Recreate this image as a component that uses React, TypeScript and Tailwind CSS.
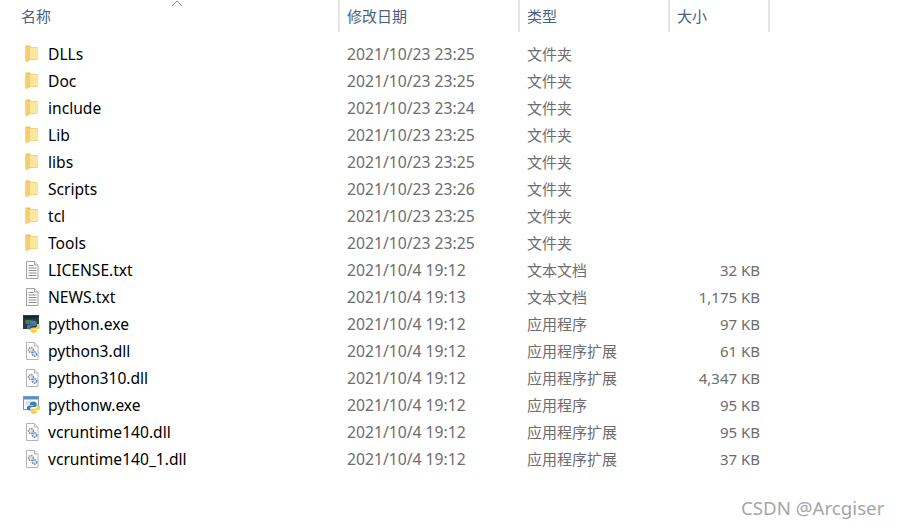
const folderType = "文件夹";

type Kind = "folder" | "txt" | "exe" | "exew" | "dll";

const files: { name: string; date: string; type: string; size: string; kind: Kind }[] = [
  { name: "DLLs", date: "2021/10/23 23:25", type: folderType, size: "", kind: "folder" },
  { name: "Doc", date: "2021/10/23 23:25", type: folderType, size: "", kind: "folder" },
  { name: "include", date: "2021/10/23 23:24", type: folderType, size: "", kind: "folder" },
  { name: "Lib", date: "2021/10/23 23:25", type: folderType, size: "", kind: "folder" },
  { name: "libs", date: "2021/10/23 23:25", type: folderType, size: "", kind: "folder" },
  { name: "Scripts", date: "2021/10/23 23:26", type: folderType, size: "", kind: "folder" },
  { name: "tcl", date: "2021/10/23 23:25", type: folderType, size: "", kind: "folder" },
  { name: "Tools", date: "2021/10/23 23:25", type: folderType, size: "", kind: "folder" },
  { name: "LICENSE.txt", date: "2021/10/4 19:12", type: "文本文档", size: "32 KB", kind: "txt" },
  { name: "NEWS.txt", date: "2021/10/4 19:13", type: "文本文档", size: "1,175 KB", kind: "txt" },
  { name: "python.exe", date: "2021/10/4 19:12", type: "应用程序", size: "97 KB", kind: "exe" },
  { name: "python3.dll", date: "2021/10/4 19:12", type: "应用程序扩展", size: "61 KB", kind: "dll" },
  { name: "python310.dll", date: "2021/10/4 19:12", type: "应用程序扩展", size: "4,347 KB", kind: "dll" },
  { name: "pythonw.exe", date: "2021/10/4 19:12", type: "应用程序", size: "95 KB", kind: "exew" },
  { name: "vcruntime140.dll", date: "2021/10/4 19:12", type: "应用程序扩展", size: "95 KB", kind: "dll" },
  { name: "vcruntime140_1.dll", date: "2021/10/4 19:12", type: "应用程序扩展", size: "37 KB", kind: "dll" },
];

function FolderIcon() {
  return (
    <svg width="16" height="18" viewBox="0 0 16 18">
      <path d="M1.500 0.500h4.500l1 1.500h6.500v13h-12z" fill="#e8c064" />
      <path d="M5 2.500h8v12H5z" fill="#fde79c" />
      <path d="M1.500 1L6 3v12.500L1.500 17.500z" fill="#f5cf6e" />
    </svg>
  );
}

function TxtIcon() {
  return (
    <svg width="16" height="18" viewBox="0 0 16 18">
      <path d="M2.500.5h8l3.500 3.500v13.500H2.500z" fill="#fff" stroke="#a0a0a0" />
      <path d="M10.500.5V4H14" fill="#f0f0f0" stroke="#a0a0a0" />
      <path d="M4.500 4.500h5M4.500 7h8M4.500 9.500h8M4.500 12h8M4.500 14.500h8" stroke="#8c8c8c" strokeWidth="1" />
    </svg>
  );
}

function DllIcon() {
  return (
    <svg width="16" height="18" viewBox="0 0 16 18">
      <path d="M2.500.5h8l3.500 3.500v13.500H2.500z" fill="#fff" stroke="#b4b4b4" />
      <path d="M10.500.5V4H14" fill="#f0f0f0" stroke="#b4b4b4" />
      <circle cx="7" cy="8" r="2.500" fill="#e2e2e2" stroke="#8f8f8f" strokeWidth="1.500" strokeDasharray="1.500 0.800" />
      <circle cx="10.500" cy="12" r="2.200" fill="#d5e6f5" stroke="#5d8fc0" strokeWidth="1.500" strokeDasharray="1.500 0.800" />
    </svg>
  );
}

function PythonLogo() {
  return (
    <g>
      <path d="M10.500 5.500c-2.500 0-3.500 1-3.500 2.200v1.300h3.500v.6H6c-1.300 0-2 1-2 2.400s.7 2.500 2 2.500h1.200v-1.700c0-1 .9-1.800 2-1.800h2.800c1 0 1.700-.8 1.700-1.700V7.700c0-1.200-1.500-2.200-3.200-2.200z" fill="#3f7fb5" />
      <path d="M10.500 18c2.500 0 3.500-1 3.500-2.200v-1.300h-3.500v-.6H15c1.300 0 2-1 2-2.400s-.7-2.500-2-2.500h-1v1.700c0 1-.9 1.800-2 1.800H9.200c-1 0-1.700.8-1.700 1.700v1.600C7.500 17 9 18 10.500 18z" fill="#f7cf4b" />
    </g>
  );
}

function ExeIcon({ light }: { light?: boolean }) {
  return (
    <svg width="18" height="18" viewBox="0 0 18 18" className="-ml-px">
      <rect x="0.500" y="0.500" width="15" height="13" fill={light ? "#fff" : "#2c3a45"} stroke={light ? "#7d97b0" : "#2c3a45"} />
      <rect x="1" y="1" width="14" height="2.500" fill={light ? "#4f93d2" : "#1c2730"} />
      {light ? (
        <path d="M2.500 6h6M2.500 8h4" stroke="#b5c4d3" />
      ) : (
        <path d="M2.500 6h6M2.500 8h4" stroke="#6fbf73" />
      )}
      <PythonLogo />
    </svg>
  );
}

function FileIcon({ kind }: { kind: Kind }) {
  if (kind === "folder") return <FolderIcon />;
  if (kind === "txt") return <TxtIcon />;
  if (kind === "dll") return <DllIcon />;
  return <ExeIcon light={kind === "exew"} />;
}

export default function App() {
  return (
    <div className="relative h-[528px] w-[900px] overflow-hidden bg-white font-['Noto_Sans','Noto_Sans_CJK_SC',sans-serif] text-[15px]">
      {/* sort arrow */}
      <svg className="absolute left-[171px] top-0" width="12" height="7" viewBox="0 0 12 7">
        <path d="M1 6l5-5 5 5" fill="none" stroke="#8a8a8a" />
      </svg>

      <div className="flex h-8 text-[#4c607a]">
        <div className="flex w-[340px] items-center border-r-2 border-[#e5e5e5] pl-[21px]">名称</div>
        <div className="flex w-[180px] items-center border-r-2 border-[#e5e5e5] pl-[7px]">修改日期</div>
        <div className="flex w-[150px] items-center border-r-2 border-[#e5e5e5] pl-[7px]">类型</div>
        <div className="flex w-[100px] items-center border-r-2 border-[#e5e5e5] pl-[7px]">大小</div>
      </div>

      <div className="pt-[9px]">
        {files.map((f) => (
          <div key={f.name} className="flex h-[27px] items-center leading-[27px]">
            <div className="flex w-[340px] items-center">
              <div className="ml-6 flex w-6 -translate-y-px items-center">
                <FileIcon kind={f.kind} />
              </div>
              <span className="text-[15.6px] text-black">{f.name}</span>
            </div>
            <div className="w-[180px] pl-[7px] text-[15.7px] text-[#6d6d6d]">{f.date}</div>
            <div className="w-[150px] pl-[7px] text-[#6d6d6d]">{f.type}</div>
            <div className="w-[90px] text-right text-[#6d6d6d]">{f.size}</div>
          </div>
        ))}
      </div>

      {/* watermark */}
      <div className="absolute left-[741px] top-[494px] text-[18.7px] leading-[27px] text-[#a6a6a6]">CSDN @Arcgiser</div>
    </div>
  );
}
